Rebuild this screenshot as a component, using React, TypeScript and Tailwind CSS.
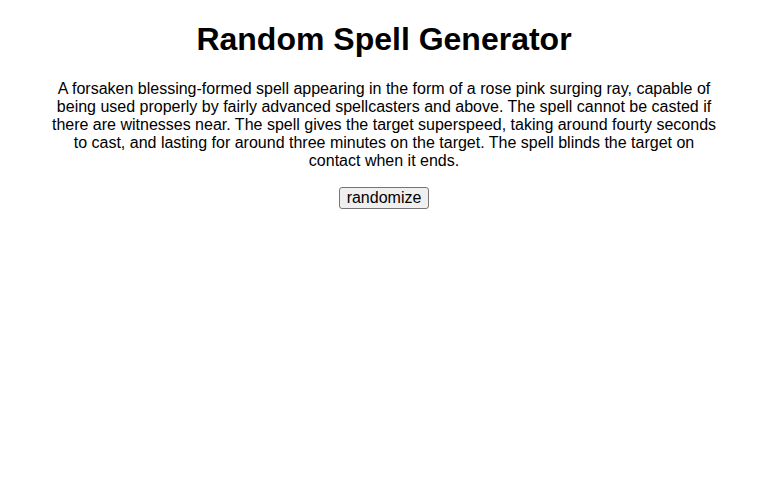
export default function App() {
  return (
    <div className="min-h-screen bg-white text-black text-center font-['Liberation_Sans',Arial,sans-serif] px-[48px] pt-[21px]">
      <h1 className="text-[32px] leading-[37px] font-bold">Random Spell Generator</h1>
      <p className="mt-[22px] text-[16px] leading-[18px]">
        A forsaken blessing-formed spell appearing in the form of a rose pink surging ray, capable of being used properly by fairly advanced spellcasters and above. The spell cannot be casted if there are witnesses near. The spell gives the target superspeed, taking around fourty seconds to cast, and lasting for around three minutes on the target. The spell blinds the target on contact when it ends.
      </p>
      <button className="mt-[17px] px-[7px] py-[1px] text-[16px] leading-[18px] bg-[#efefef] border border-[#767676] rounded-[3px] text-black">
        randomize
      </button>
    </div>
  );
}
